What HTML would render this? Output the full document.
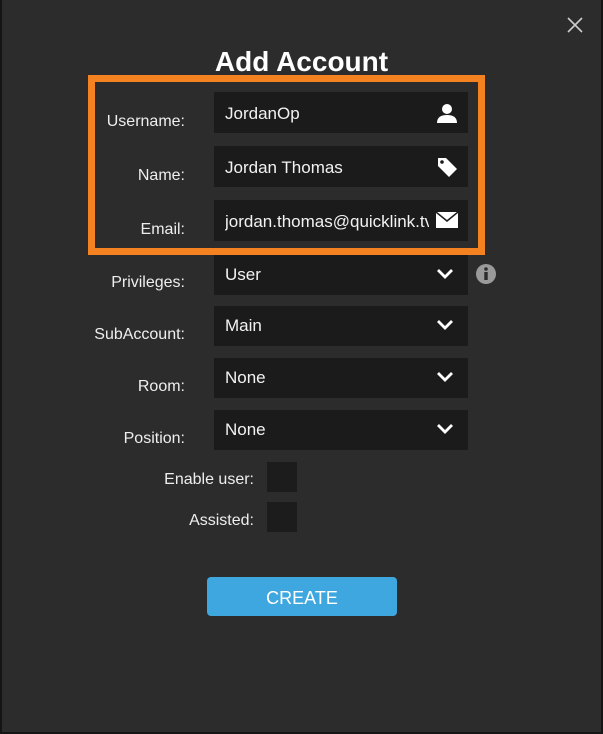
<!DOCTYPE html>
<html><head><style>
*{margin:0;padding:0;box-sizing:border-box}
html,body{width:603px;height:734px;background:#151515;overflow:hidden}
body{font-family:"Liberation Sans",sans-serif;color:#fff}
.win{position:absolute;left:2px;top:0;width:599px;height:732px;background:#2c2c2c}
.t{position:absolute;left:0;width:603px;top:46px;text-align:center;font-weight:bold;font-size:28px}
.box{position:absolute;left:88px;top:75px;width:397px;height:180px;border:7px solid #f58220}
.lbl{position:absolute;right:418px;font-size:16px;color:#eee;text-align:right;white-space:nowrap}
.in{position:absolute;left:214px;width:254px;height:41px;background:#1b1b1b;font-size:17px;padding-left:11px;line-height:43px;overflow:hidden;white-space:nowrap;color:#f2f2f2}
.in svg{position:absolute;right:10px;top:10px}
.in span{display:inline-block;width:204px;overflow:hidden;vertical-align:top}
.dd{height:40px;line-height:40px}
.cb{position:absolute;left:267px;width:30px;height:30px;background:#1c1c1c}
.btn{position:absolute;left:207px;top:577px;width:190px;height:39px;background:#3fa7df;border-radius:4px;text-align:center;line-height:42px;font-size:18px}
</style></head><body>
<div class="win"></div>
<svg style="position:absolute;left:567px;top:17px" width="16" height="16"><path d="M1 1L15 15M15 1L1 15" stroke="#ccc" stroke-width="1.6"/></svg>
<div class="t">Add Account</div>
<div class="box"></div>
<div class="lbl" style="top:113px">Username:</div>
<div class="lbl" style="top:167px">Name:</div>
<div class="lbl" style="top:221px">Email:</div>
<div class="lbl" style="top:274px">Privileges:</div>
<div class="lbl" style="top:326px">SubAccount:</div>
<div class="lbl" style="top:378px">Room:</div>
<div class="lbl" style="top:430px">Position:</div>
<div class="lbl" style="top:471px;right:349px">Enable user:</div>
<div class="lbl" style="top:512px;right:349px">Assisted:</div>
<div class="in" style="top:92px">JordanOp<svg width="22" height="22" viewBox="0 0 22 22"><circle cx="11" cy="7" r="5" fill="#fff"/><path d="M1 21Q1 13 11 13Q21 13 21 21Z" fill="#fff"/></svg></div>
<div class="in" style="top:146px">Jordan Thomas<svg width="22" height="22" viewBox="0 0 22 22"><path d="M2 2H10L21 13L13 21L2 10Z" fill="#fff"/><circle cx="6" cy="6" r="1.8" fill="#1b1b1b"/></svg></div>
<div class="in" style="top:200px"><span>jordan.thomas@quicklink.tv</span><svg style="top:12px" width="22" height="16" viewBox="0 0 22 16"><rect width="22" height="16" fill="#fff"/><path d="M0 0L11 9L22 0" stroke="#1b1b1b" stroke-width="1.5" fill="none"/></svg></div>
<div class="in dd" style="top:255px">User<svg style="top:13px;right:14px" width="18" height="12"><path d="M2 2L9 9L16 2" stroke="#fff" stroke-width="2.8" fill="none"/></svg></div>
<div class="in dd" style="top:306px">Main<svg style="top:13px;right:14px" width="18" height="12"><path d="M2 2L9 9L16 2" stroke="#fff" stroke-width="2.8" fill="none"/></svg></div>
<div class="in dd" style="top:358px">None<svg style="top:13px;right:14px" width="18" height="12"><path d="M2 2L9 9L16 2" stroke="#fff" stroke-width="2.8" fill="none"/></svg></div>
<div class="in dd" style="top:410px">None<svg style="top:13px;right:14px" width="18" height="12"><path d="M2 2L9 9L16 2" stroke="#fff" stroke-width="2.8" fill="none"/></svg></div>
<svg style="position:absolute;left:476px;top:264px" width="20" height="20"><circle cx="10" cy="10" r="10" fill="#9a9a9a"/><circle cx="10" cy="5" r="1.8" fill="#2c2c2c"/><rect x="8.3" y="8" width="3.4" height="8" fill="#2c2c2c"/></svg>
<div class="cb" style="top:462px"></div>
<div class="cb" style="top:502px"></div>
<div class="btn">CREATE</div>
</body></html>
